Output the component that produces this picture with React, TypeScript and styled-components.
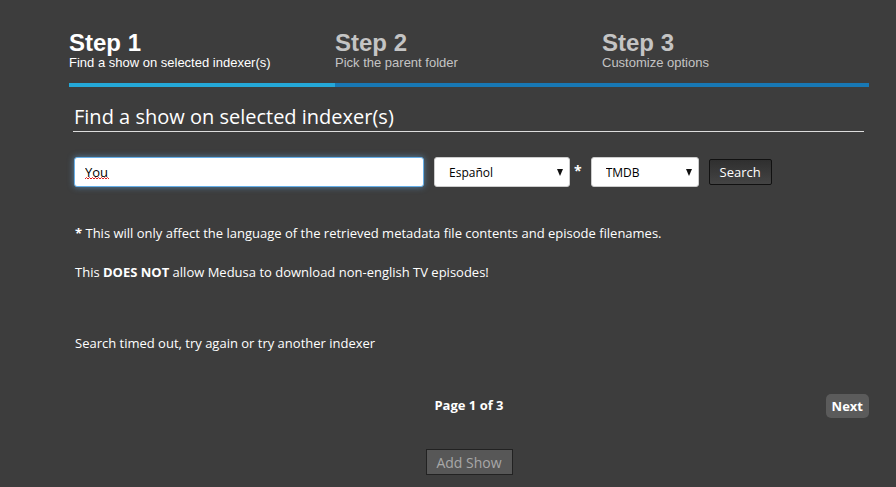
import React, { useState } from 'react';
import styled, { createGlobalStyle } from 'styled-components';

const GlobalStyle = createGlobalStyle`
    body {
        margin: 0;
        background: #3d3d3d;
        color: #ffffff;
        font-family: 'Open Sans', 'Liberation Sans', sans-serif;
        font-size: 13px;
    }
`;

const STEPS = [
    { title: 'Step 1', sub: 'Find a show on selected indexer(s)' },
    { title: 'Step 2', sub: 'Pick the parent folder' },
    { title: 'Step 3', sub: 'Customize options' },
];

const App: React.FC = () => {
    const [query, setQuery] = useState('You');
    const [lang, setLang] = useState('es');
    const [indexer, setIndexer] = useState('tmdb');
    const current = 0;

    return (
        <Page>
            <GlobalStyle />
            <Steps>
                {STEPS.map((s, i) => (
                    <Step key={s.title} $active={i === current}>
                        <StepTitle>{s.title}</StepTitle>
                        <StepSub>{s.sub}</StepSub>
                    </Step>
                ))}
            </Steps>

            <Legend>Find a show on selected indexer(s)</Legend>

            <FormRow>
                <InputWrap>
                    <SearchInput
                        value={query}
                        onChange={(e) => setQuery(e.target.value)}
                        spellCheck={false}
                    />
                    {/* spellcheck squiggle under the misspelled word */}
                    <Squiggle width="24" height="3" viewBox="0 0 24 3">
                        <path
                            d="M0 2 L1.5 0.5 L3 2 L4.5 0.5 L6 2 L7.5 0.5 L9 2 L10.5 0.5 L12 2 L13.5 0.5 L15 2 L16.5 0.5 L18 2 L19.5 0.5 L21 2 L22.5 0.5 L24 2"
                            fill="none"
                            stroke="#e02020"
                            strokeWidth="1"
                        />
                    </Squiggle>
                </InputWrap>
                <SelectWrap $width={136} $gap={10}>
                    <Select value={lang} onChange={(e) => setLang(e.target.value)}>
                        <option value="es">Español</option>
                        <option value="en">English</option>
                    </Select>
                </SelectWrap>
                <Asterisk>*</Asterisk>
                <SelectWrap $width={108} $gap={9}>
                    <Select
                        value={indexer}
                        onChange={(e) => setIndexer(e.target.value)}
                    >
                        <option value="tmdb">TMDB</option>
                        <option value="tvdb">TVDB</option>
                    </Select>
                </SelectWrap>
                <SearchButton>Search</SearchButton>
            </FormRow>

            <Note $top={37}>
                <b>*</b> This will only affect the language of the retrieved
                metadata file contents and episode filenames.
            </Note>
            <Note $top={21}>
                This <b>DOES NOT</b> allow Medusa to download non-english TV
                episodes!
            </Note>
            <Note $top={53}>Search timed out, try again or try another indexer</Note>

            <Pager>
                <PageLabel>Page 1 of 3</PageLabel>
                <NextButton>Next</NextButton>
            </Pager>

            <Footer>
                <AddShowButton disabled>Add Show</AddShowButton>
            </Footer>
        </Page>
    );
};

export default App;

const Page = styled.div`
    width: 800px;
    margin-left: 69px;
    padding-top: 30px;
`;

const Steps = styled.div`
    display: grid;
    grid-template-columns: 266px 267px 267px;
`;

const Step = styled.div<{ $active: boolean }>`
    font-family: 'Liberation Sans', Arial, sans-serif;
    color: ${(p) => (p.$active ? '#ffffff' : '#c4c4c4')};
    padding-bottom: 13px;
    border-bottom: 4px solid ${(p) => (p.$active ? '#24a8d8' : '#1878b4')};
`;

const StepTitle = styled.div`
    font-size: 24px;
    font-weight: 700;
    line-height: 26px;
`;

const StepSub = styled.div`
    font-size: 13px;
    line-height: 14px;
`;

const Legend = styled.h3`
    margin: 17px 5px 0 4px;
    padding: 0 0 2px 1px;
    font-family: 'Open Sans', sans-serif;
    font-weight: 400;
    font-size: 20px;
    line-height: 25px;
    color: #ffffff;
    border-bottom: 1px solid #dddddd;
`;

const FormRow = styled.div`
    display: flex;
    align-items: center;
    margin: 25px 0 0 5px;
`;

const InputWrap = styled.div`
    position: relative;
    display: flex;
`;

const SearchInput = styled.input`
    box-sizing: border-box;
    width: 350px;
    height: 30px;
    padding: 0 10px;
    border: 1px solid #66afe9;
    border-radius: 3px;
    box-shadow: 0 0 6px rgba(102, 175, 233, 0.6);
    font-family: 'Open Sans', sans-serif;
    font-size: 13px;
    color: #000000;
    outline: none;
`;

const Squiggle = styled.svg`
    position: absolute;
    left: 11px;
    top: 20px;
    pointer-events: none;
`;

const SelectWrap = styled.div<{ $width: number; $gap: number }>`
    position: relative;
    width: ${(p) => p.$width}px;
    margin-left: ${(p) => p.$gap}px;

    &::after {
        content: '';
        position: absolute;
        right: 7px;
        top: 12px;
        border-left: 3.5px solid transparent;
        border-right: 3.5px solid transparent;
        border-top: 7px solid #111111;
        pointer-events: none;
    }
`;

const Select = styled.select`
    box-sizing: border-box;
    width: 100%;
    height: 30px;
    padding: 0 14px;
    border: 1px solid #cccccc;
    border-radius: 3px;
    background: #ffffff;
    font-family: 'Open Sans', sans-serif;
    font-size: 12px;
    color: #000000;
    appearance: none;
    outline: none;
`;

const Asterisk = styled.span`
    margin: 0 0 4px 4px;
    font-weight: 700;
    font-size: 14px;
`;

const SearchButton = styled.button`
    box-sizing: border-box;
    width: 63px;
    height: 26px;
    margin-left: 10px;
    border: 1px solid #111111;
    border-radius: 2px;
    background: linear-gradient(#2f2f2f, #444444);
    color: #ffffff;
    font-family: 'Open Sans', sans-serif;
    font-size: 13px;
`;

const Note = styled.p<{ $top: number }>`
    margin: ${(p) => p.$top}px 0 0 6px;
    line-height: 18px;

    b {
        font-weight: 700;
    }
`;

const Pager = styled.div`
    position: relative;
    display: flex;
    justify-content: center;
    align-items: center;
    margin-top: 41px;
    height: 26px;
`;

const PageLabel = styled.span`
    font-weight: 700;
    font-size: 13px;
    margin-top: -3px;
`;

const NextButton = styled.button`
    position: absolute;
    right: 0;
    top: 1px;
    height: 24px;
    padding: 0 6px;
    border: none;
    border-radius: 5px;
    background: #5b5b5b;
    color: #ffffff;
    font-family: 'Open Sans', sans-serif;
    font-weight: 700;
    font-size: 13px;
`;

const Footer = styled.div`
    display: flex;
    justify-content: center;
    margin-top: 30px;
`;

const AddShowButton = styled.button`
    box-sizing: border-box;
    width: 87px;
    height: 26px;
    border: 1px solid #222222;
    background: #575757;
    color: #a8a8a8;
    font-family: 'Open Sans', sans-serif;
    font-size: 14px;
`;
